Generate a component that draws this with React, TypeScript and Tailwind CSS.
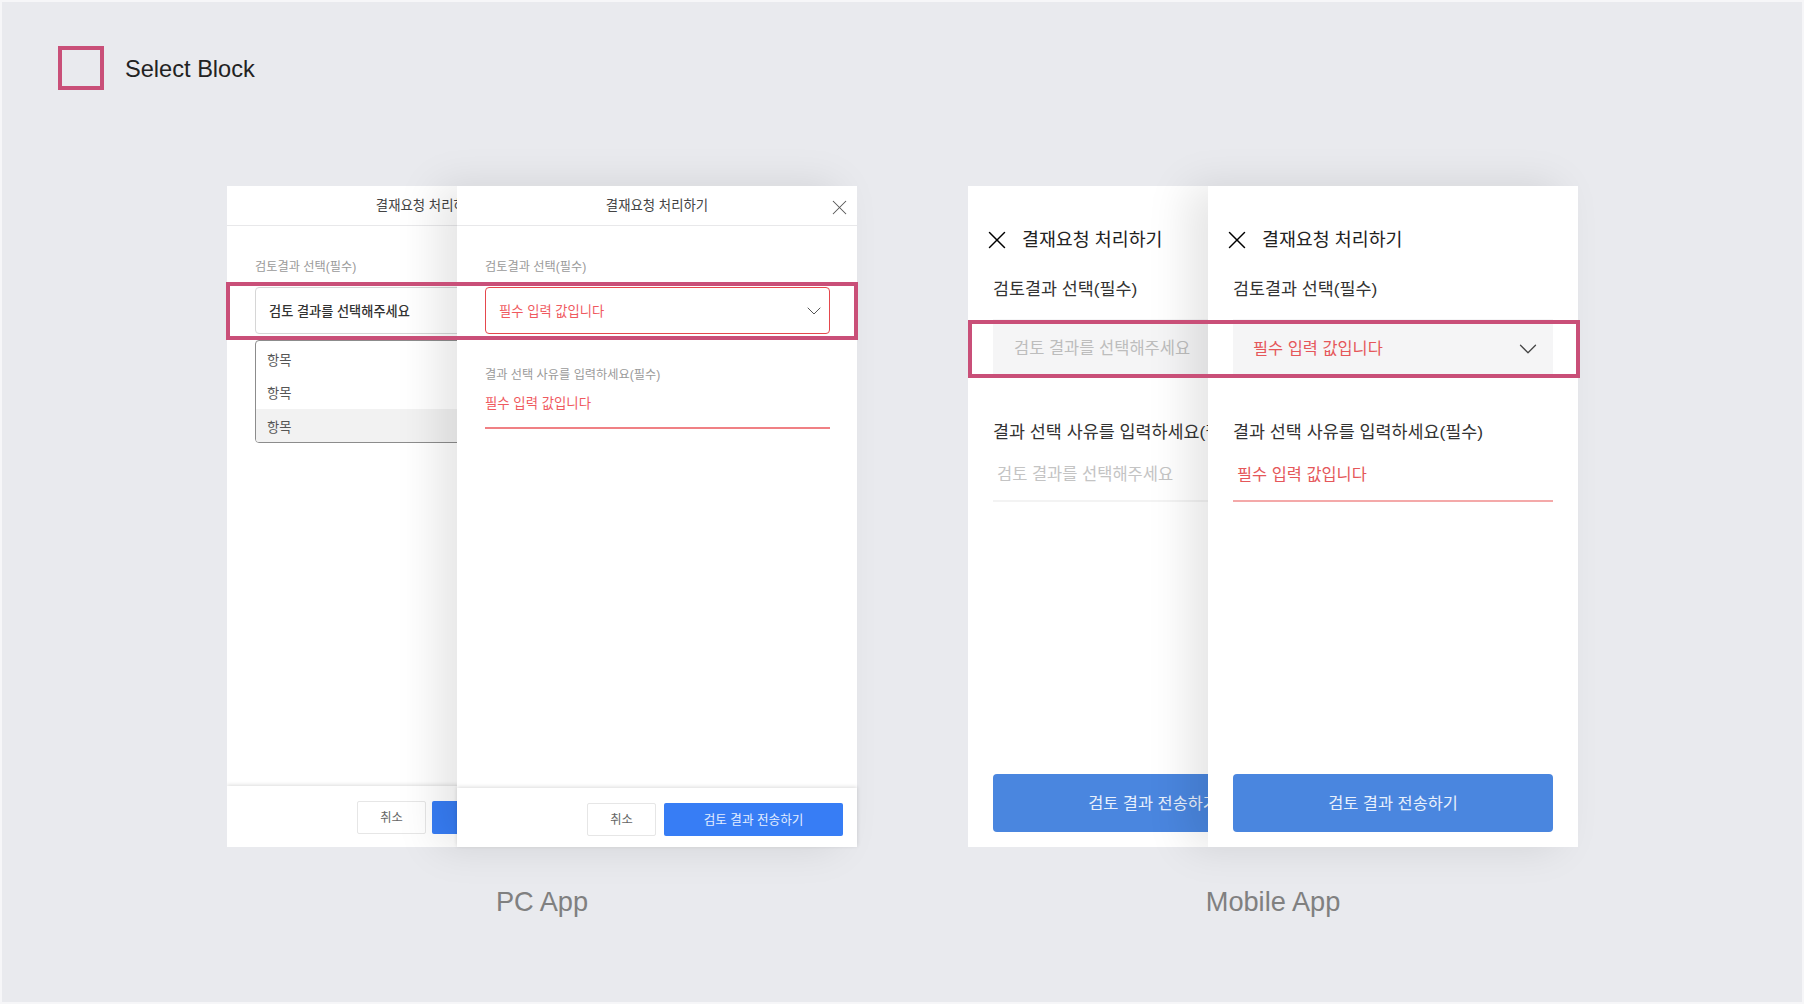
import { ChevronDown, X } from "lucide-react";

const panelShadow = "shadow-[-20px_0_40px_rgba(0,0,0,0.1)]";

function PcHeader() {
  return (
    <header className="h-[40px] shrink-0 pt-[2px] border-b border-[#e8e8ea] grid grid-cols-[1fr_auto_1fr] items-center text-[13.4px] text-[#444]">
      <span />
      <span>결재요청 처리하기</span>
      <X size={25} strokeWidth={1} className="justify-self-end mr-[5px] mt-[1px] text-[#555]" />
    </header>
  );
}

function PcFooter({ left }: { left?: boolean }) {
  return (
    <footer
      className={`${left ? "h-[61px] gap-[6px] pr-[10px]" : "h-[59px] gap-[8px] pr-[14px]"} shrink-0 mt-auto pt-[15px] flex justify-end bg-white shadow-[0_-1px_4px_rgba(0,0,0,0.14)]`}
    >
      <button className="w-[69px] h-[33px] pt-[1px] border border-[#e6e6e6] rounded-[2px] text-[12.3px] text-[#666] bg-white">
        취소
      </button>
      <button className={`${left ? "w-[185px]" : "w-[179px]"} h-[33px] pt-[1px] rounded-[2px] text-[12.6px] text-[#e3edff] bg-[#377df5]`}>
        검토 결과 전송하기
      </button>
    </footer>
  );
}

function PcLeft() {
  return (
    <div className="w-[230px] h-full bg-white overflow-hidden">
      <div className="w-[400px] h-full flex flex-col">
        <PcHeader />
        <div className="pl-[28px] pr-[27px]">
          <p className="mt-[33px] h-[16px] leading-[16px] text-[12.2px] text-[#9a9a9a]">검토결과 선택(필수)</p>
          <div className="mt-[12px] h-[47px] pl-[13px] pt-[2px] flex items-center border border-[#d6d6d6] rounded-[4px] text-[13.2px] font-medium text-[#333]">
            검토 결과를 선택해주세요
          </div>
          <ul className="mt-[6px] h-[103px] pt-[2px] border border-[#8c8c8c] rounded-[4px] overflow-hidden text-[13.3px] text-[#555]">
            <li className="h-[33px] pl-[11px] pt-[2px] flex items-center">항목</li>
            <li className="h-[33px] pl-[11px] pt-[2px] flex items-center">항목</li>
            <li className="h-[35px] pl-[11px] pt-[2px] flex items-center bg-[#f2f2f2]">항목</li>
          </ul>
        </div>
        <PcFooter left />
      </div>
    </div>
  );
}

function PcRight() {
  return (
    <div className={`relative w-[400px] h-full flex flex-col bg-white ${panelShadow}`}>
      <PcHeader />
      <div className="pl-[28px] pr-[27px]">
        <p className="mt-[33px] h-[16px] leading-[16px] text-[12.2px] text-[#9a9a9a]">검토결과 선택(필수)</p>
        <div className="mt-[12px] h-[47px] pl-[13px] pr-[3px] flex items-center justify-between border border-[#e5484d] rounded-[4px] text-[13.3px] text-[#ef5a5f]">
          <span className="pt-[2px]">필수 입력 값입니다</span>
          <ChevronDown size={24} strokeWidth={1} className="text-[#555]" />
        </div>
        <p className="mt-[33px] h-[16px] leading-[16px] text-[12.2px] text-[#9a9a9a]">결과 선택 사유를 입력하세요(필수)</p>
        <p className="mt-[13px] h-[31px] leading-[16px] border-b-2 border-[#f08084] box-content text-[13.4px] text-[#ef5a5f]">
          필수 입력 값입니다
        </p>
      </div>
      <PcFooter />
    </div>
  );
}

function MobileHeader() {
  return (
    <>
      <div className="mt-[39px] pl-[14px] flex items-center gap-[10px] h-[30px]">
        <X size={30} strokeWidth={1.2} className="text-black" />
        <span className="text-[18.4px] text-[#222]">결재요청 처리하기</span>
      </div>
      <p className="mt-[22px] ml-[25px] h-[24px] leading-[24px] text-[17.4px] text-[#333]">검토결과 선택(필수)</p>
    </>
  );
}

function MobileButton() {
  return (
    <button className="mt-auto mb-[15px] mx-[25px] w-[320px] h-[58px] shrink-0 rounded-[4px] bg-[#4a86df] text-[16.4px] text-[#e8f0fc]">
      검토 결과 전송하기
    </button>
  );
}

function MobileLeft() {
  return (
    <div className="w-[240px] h-full bg-white overflow-hidden">
      <div className="w-[370px] h-full flex flex-col">
        <MobileHeader />
        <div className="mt-[18px] mx-[25px] h-[55px] pl-[21px] pt-[4px] flex items-center bg-[#f5f5f6] text-[16.5px] text-[#bdbdbd]">
          검토 결과를 선택해주세요
        </div>
        <p className="mt-[46px] ml-[25px] h-[24px] leading-[24px] text-[17.4px] text-[#333] whitespace-nowrap">
          결과 선택 사유를 입력하세요(필수)
        </p>
        <p className="mt-[18px] mx-[25px] pl-[4px] pb-[14px] border-b-2 border-[#f3f3f3] leading-[24px] text-[16.5px] text-[#c4c4c4]">
          검토 결과를 선택해주세요
        </p>
        <MobileButton />
      </div>
    </div>
  );
}

function MobileRight() {
  return (
    <div className={`relative w-[370px] h-full flex flex-col bg-white ${panelShadow}`}>
      <MobileHeader />
      <div className="mt-[18px] mx-[25px] h-[55px] pl-[20px] pr-[10px] pt-[4px] flex items-center justify-between bg-[#f5f5f6] text-[16.4px] text-[#e5575a]">
        필수 입력 값입니다
        <ChevronDown size={30} strokeWidth={1} className="text-[#444]" />
      </div>
      <p className="mt-[46px] ml-[25px] h-[24px] leading-[24px] text-[17.4px] text-[#333] whitespace-nowrap">
        결과 선택 사유를 입력하세요(필수)
      </p>
      <p className="mt-[18px] mx-[25px] pl-[4px] pb-[14px] border-b-2 border-[#f4a9a9] leading-[24px] text-[16.4px] text-[#e5575a]">
        필수 입력 값입니다
      </p>
      <MobileButton />
    </div>
  );
}

export default function App() {
  return (
    <div className="w-[1804px] h-[1004px] overflow-hidden border-2 border-[#f6f6f8] bg-[#e9eaee] font-['Liberation_Sans','Noto_Sans_CJK_KR',sans-serif]">
      {/* LEGEND */}
      <div className="pt-[44px] pl-[56px] flex items-center gap-[21px]">
        <div className="w-[46px] h-[44px] border-4 border-[#c94f78]" />
        <span className="pt-[3px] text-[23.6px] text-[#222]">Select Block</span>
      </div>

      <div className="mt-[96px] pl-[225px] flex gap-[111px]">
        {/* PC APP */}
        <div className="w-[630px]">
          <div className="relative h-[661px] flex">
            <PcLeft />
            <PcRight />
            <div className="absolute left-[-1px] top-[96px] w-[632px] h-[58px] border-4 border-[#c94f78]" />
          </div>
          <p className="mt-[39px] text-center text-[27.2px] leading-[32px] text-[#808080]">PC App</p>
        </div>

        {/* MOBILE APP */}
        <div className="w-[610px]">
          <div className="relative h-[661px] flex">
            <MobileLeft />
            <MobileRight />
            <div className="absolute left-0 top-[134px] w-[612px] h-[58px] border-4 border-[#c94f78]" />
          </div>
          <p className="mt-[39px] text-center text-[27.2px] leading-[32px] text-[#808080]">Mobile App</p>
        </div>
      </div>
    </div>
  );
}
